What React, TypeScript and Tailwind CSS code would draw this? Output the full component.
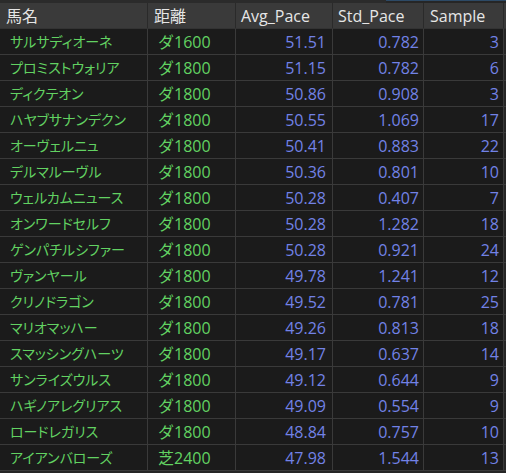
const rows: [string, string, string, string, number][] = [
  ['サルサディオーネ', 'ダ1600', '51.51', '0.782', 3],
  ['プロミストウォリア', 'ダ1800', '51.15', '0.782', 6],
  ['ディクテオン', 'ダ1800', '50.86', '0.908', 3],
  ['ハヤブサナンデクン', 'ダ1800', '50.55', '1.069', 17],
  ['オーヴェルニュ', 'ダ1800', '50.41', '0.883', 22],
  ['デルマルーヴル', 'ダ1800', '50.36', '0.801', 10],
  ['ウェルカムニュース', 'ダ1800', '50.28', '0.407', 7],
  ['オンワードセルフ', 'ダ1800', '50.28', '1.282', 18],
  ['ゲンパチルシファー', 'ダ1800', '50.28', '0.921', 24],
  ['ヴァンヤール', 'ダ1800', '49.78', '1.241', 12],
  ['クリノドラゴン', 'ダ1800', '49.52', '0.781', 25],
  ['マリオマッハー', 'ダ1800', '49.26', '0.813', 18],
  ['スマッシングハーツ', 'ダ1800', '49.17', '0.637', 14],
  ['サンライズウルス', 'ダ1800', '49.12', '0.644', 9],
  ['ハギノアレグリアス', 'ダ1800', '49.09', '0.554', 9],
  ['ロードレガリス', 'ダ1800', '48.84', '0.757', 10],
  ['アイアンバローズ', '芝2400', '47.98', '1.544', 13],
];

const jp = "font-['Noto_Sans_CJK_JP',sans-serif] [font-feature-settings:'palt']";
const num = "font-['Open_Sans','Noto_Sans_CJK_JP',sans-serif]";

export default function App() {
  return (
    <div className="w-[506px] h-[473px] bg-[#262626] overflow-hidden">
      <div className="h-[3px] flex">
        <div className="flex-1 bg-[#2b2b2b]" />
        <div className="w-[120px] h-[1px] bg-[#2d4a66]" />
      </div>
      <div className={`flex h-[26px] bg-[#3a3a3a] text-[#e6e6e6] text-[16px] ${num} border-b border-[#333]`}>
        <div className="w-[148px] flex items-center pl-[6px] border-r border-[#2a2a2a]">馬名</div>
        <div className="w-[88px] flex items-center pl-[6px] border-r border-[#2a2a2a]">距離</div>
        <div className="w-[97px] flex items-center pl-[5px] border-r border-[#2a2a2a]">Avg_Pace</div>
        <div className="w-[91px] flex items-center pl-[5px] border-r border-[#2a2a2a]">Std_Pace</div>
        <div className="w-[80px] flex items-center pl-[6px] border-r border-[#2a2a2a]">Sample</div>
        <div className="flex-1" />
      </div>
      {rows.map(([name, dist, avg, std, n]) => (
        <div key={name} className="flex h-[26px] bg-[#1b1b1b] border-b border-[#3a3a3a]">
          <div className={`w-[148px] flex items-center pl-[10px] border-r border-[#3a3a3a] text-[#62d262] text-[14px] ${jp}`}>
            {name}
          </div>
          <div className={`w-[88px] flex items-center pl-[10px] border-r border-[#3a3a3a] text-[#62d262] text-[16px] ${num}`}>
            {dist}
          </div>
          <div className={`w-[97px] flex items-center justify-end pr-[6px] border-r border-[#3a3a3a] text-[#7282e6] text-[16px] ${num}`}>
            {avg}
          </div>
          <div className={`w-[91px] flex items-center justify-end pr-[4px] border-r border-[#3a3a3a] text-[#7282e6] text-[16px] ${num}`}>
            {std}
          </div>
          <div className={`w-[80px] flex items-center justify-end pr-[4px] border-r border-[#3a3a3a] text-[#7282e6] text-[16px] ${num}`}>
            {n}
          </div>
          <div className="flex-1 bg-[#262626]" />
        </div>
      ))}
    </div>
  );
}
